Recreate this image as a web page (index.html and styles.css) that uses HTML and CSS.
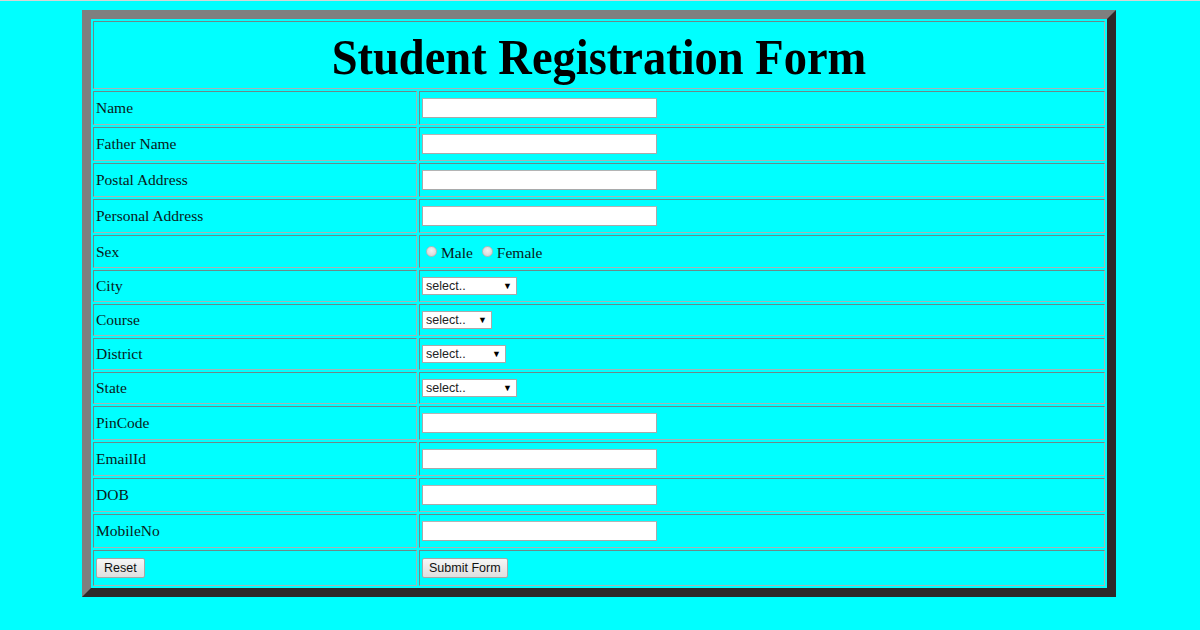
FILE: index.html
```html
<!DOCTYPE html>
<html>
<head>
<meta charset="utf-8">
<title>Student Registration Form</title>
<link rel="stylesheet" href="styles.css">
</head>
<body>
<div class="page">
<form class="reg-form">
<table class="reg-table">
  <colgroup><col class="col-lbl"><col class="col-fld"></colgroup>
  <tr class="row-title"><td colspan="2" class="title-cell"><span class="title">Student Registration Form</span></td></tr>
  <tr class="row-text"><td class="lbl">Name</td><td class="fld"><input type="text" class="txt"></td></tr>
  <tr class="row-text"><td class="lbl">Father Name</td><td class="fld"><input type="text" class="txt"></td></tr>
  <tr class="row-text"><td class="lbl">Postal Address</td><td class="fld"><input type="text" class="txt"></td></tr>
  <tr class="row-text"><td class="lbl">Personal Address</td><td class="fld"><input type="text" class="txt"></td></tr>
  <tr class="row-sex"><td class="lbl">Sex</td><td class="fld"><span class="radio-group"><span class="radio"></span><span class="radio-text">Male</span><span class="radio"></span><span class="radio-text">Female</span></span></td></tr>
  <tr class="row-sel"><td class="lbl">City</td><td class="fld"><span class="sel sel-95">select..<span class="arrow">▼</span></span></td></tr>
  <tr class="row-sel"><td class="lbl">Course</td><td class="fld"><span class="sel sel-70">select..<span class="arrow">▼</span></span></td></tr>
  <tr class="row-sel"><td class="lbl">District</td><td class="fld"><span class="sel sel-84">select..<span class="arrow">▼</span></span></td></tr>
  <tr class="row-sel"><td class="lbl">State</td><td class="fld"><span class="sel sel-95">select..<span class="arrow">▼</span></span></td></tr>
  <tr class="row-text"><td class="lbl">PinCode</td><td class="fld"><input type="text" class="txt"></td></tr>
  <tr class="row-text"><td class="lbl">EmailId</td><td class="fld"><input type="text" class="txt"></td></tr>
  <tr class="row-text"><td class="lbl">DOB</td><td class="fld"><input type="text" class="txt"></td></tr>
  <tr class="row-text"><td class="lbl">MobileNo</td><td class="fld"><input type="text" class="txt"></td></tr>
  <tr class="row-btn"><td class="lbl"><button type="button" class="btn btn-reset">Reset</button></td><td class="fld"><button type="button" class="btn">Submit Form</button></td></tr>
</table>
</form>
</div>
</body>
</html>
```
FILE: styles.css
```css
html, body {
  margin: 0;
  padding: 0;
  background: #00ffff;
}
body {
  width: 1200px;
  height: 630px;
  overflow: hidden;
  font-family: "Liberation Serif", "Times New Roman", serif;
  color: #000;
}
.page {
  border-top: 1px solid #d6d6d6;
  padding-top: 9px;
  padding-left: 82px;
}
.reg-form {
  margin: 0;
}
.reg-table {
  border-collapse: separate;
  border-spacing: 2px;
  border-style: solid;
  border-width: 9px;
  border-color: #7f7f7f #2e2a2a #2e2a2a #7f7f7f;
  width: 1034px;
  box-sizing: border-box;
  table-layout: fixed;
}
.col-lbl {
  width: 324px;
}
.reg-table td {
  border: 1px solid;
  border-color: #6a8a8a #a6b4b4 #a6b4b4 #6a8a8a;
  padding: 0 2px;
  vertical-align: middle;
  box-sizing: border-box;
  font-size: 15.5px;
  color: #0a1a1a;
}
.fld {
  padding-left: 0;
}
.title-cell {
  text-align: center;
  height: 68px;
}
.title {
  font-weight: bold;
  font-size: 46.5px;
  color: #000;
  display: inline-block;
  transform: scaleY(1.1);
  position: relative;
  top: 1px;
}
.row-text td { height: 34px; }
.row-sex td { height: 33px; }
.row-sel td { height: 32px; }
.row-btn td { height: 36px; }
.txt {
  display: block;
  width: 235px;
  height: 20px;
  box-sizing: border-box;
  margin: 0;
  border: 1px solid #a9a9a9;
  border-top-color: #b4b4b4;
  background: #fff;
  padding: 0;
}
.radio-group {
  display: flex;
  align-items: center;
  padding-left: 4px;
  padding-top: 2px;
}
.radio {
  width: 11px;
  height: 11px;
  border-radius: 50%;
  box-sizing: border-box;
  border: 1px solid #b8b8b8;
  background: radial-gradient(circle at 50% 40%, #f0f0f0, #d0d0d0);
  margin-right: 4px;
  margin-top: -3px;
}
.radio-text {
  margin-right: 9px;
}
.sel {
  display: flex;
  align-items: center;
  justify-content: space-between;
  height: 18px;
  box-sizing: border-box;
  margin-left: 0;
  border: 1px solid #a9a9a9;
  background: #fff;
  font-family: "Liberation Sans", Arial, sans-serif;
  font-size: 12.5px;
  color: #222;
  padding: 0 4px 0 3px;
}
.sel-95 { width: 95px; }
.sel-70 { width: 70px; }
.sel-84 { width: 84px; }
.arrow {
  font-size: 9px;
  color: #000;
}
.btn {
  display: block;
  font-family: "Liberation Sans", Arial, sans-serif;
  font-size: 12.5px;
  color: #111;
  height: 20px;
  padding: 0 6px;
  margin: 0;
  border: 1px solid #a7a7a7;
  border-radius: 2px;
  background: linear-gradient(#f6f6f6, #dedede);
}
.btn-reset {
  padding: 0 7px;
}
```
